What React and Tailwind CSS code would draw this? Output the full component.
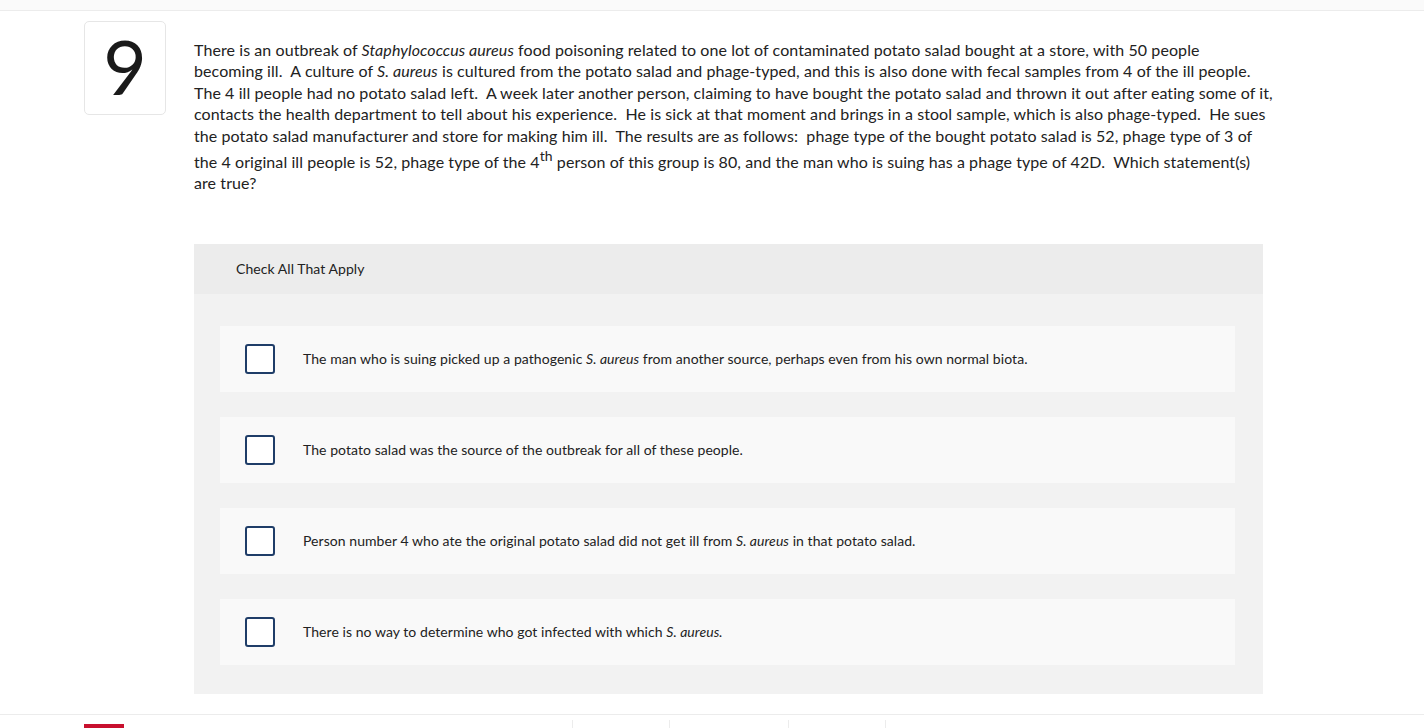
import React from 'react';

const font = { fontFamily: 'Lato, "Open Sans", "Liberation Sans", sans-serif' };

const options = [
  <>The man who is suing picked up a pathogenic <i>S. aureus</i> from another source, perhaps even from his own normal biota.</>,
  <>The potato salad was the source of the outbreak for all of these people.</>,
  <>Person number 4 who ate the original potato salad did not get ill from <i>S. aureus</i> in that potato salad.</>,
  <>There is no way to determine who got infected with which <i>S. aureus.</i></>,
];

const Option = ({ children }) => (
  <label className="flex items-center h-[66px] bg-[#f9f9f9] px-[25px] cursor-pointer">
    <span className="w-[30px] h-[30px] shrink-0 border-2 border-[#1f3d68] rounded-[3px] bg-white"></span>
    <span className="ml-[28px] text-[14px] tracking-[0.06px] text-[#222]">{children}</span>
  </label>
);

export default function App() {
  return (
    <div className="w-[1424px] h-[728px] bg-white overflow-hidden flex flex-col" style={font}>
      {/* top strip */}
      <div className="h-[11px] bg-[#fafafa] border-b border-[#ececec] shrink-0"></div>

      <div className="flex-1 flex flex-col">
        <div className="flex pl-[84px] pt-[10px]">
          {/* question number */}
          <div className="w-[82px] h-[94px] shrink-0 border border-[#e6e6e6] rounded-[5px] flex items-center justify-center">
            <span className="text-[75px] leading-none text-[#1a1a1a] font-normal -mt-[4px]">9</span>
          </div>

          <div className="ml-[28px] w-[1069px]">
            {/* line breaks kept as in the source layout */}
            <p className="mt-[18px] w-[1100px] text-[16px] tracking-[0.08px] leading-[21.4px] text-[#222]">
              There is an outbreak of <i>Staphylococcus aureus</i> food poisoning related to one lot of contaminated potato salad bought at a store, with 50 people<br />
              becoming ill.&nbsp; A culture of <i>S. aureus</i> is cultured from the potato salad and phage-typed, and this is also done with fecal samples from 4 of the ill people.<br />
              The 4 ill people had no potato salad left.&nbsp; A week later another person, claiming to have bought the potato salad and thrown it out after eating some of it,<br />
              contacts the health department to tell about his experience.&nbsp; He is sick at that moment and brings in a stool sample, which is also phage-typed.&nbsp; He sues<br />
              the potato salad manufacturer and store for making him ill.&nbsp; The results are as follows:&nbsp; phage type of the bought potato salad is 52, phage type of 3 of<br />
              the 4 original ill people is 52, phage type of the 4<sup className="top-0 align-[7px] text-[14px] leading-[20px]">th</sup> person of this group is 80, and the man who is suing has a phage type of 42D.&nbsp; Which statement(s)<br />
              are true?
            </p>

            <div className="mt-[50px] bg-[#f2f2f2]">
              <div className="h-[50px] bg-[#ececec] flex items-center pl-[42px] text-[14px] tracking-[0.06px] text-[#222]">
                Check All That Apply
              </div>
              <div className="pt-[32px] pb-[29px] pl-[26px] pr-[28px] flex flex-col gap-[25px]">
                {options.map((o, i) => (
                  <Option key={i}>{o}</Option>
                ))}
              </div>
            </div>
          </div>
        </div>
      </div>

      {/* footer */}
      <div className="h-[14px] shrink-0 border-t border-[#ececec] relative">
        <div className="absolute left-[84px] bottom-0 w-[40px] h-[4px] bg-[#c8102e]"></div>
        <div className="absolute left-[572px] top-[5px] bottom-0 flex">
          <div className="w-[97px] border-l border-[#ececec] h-full"></div>
          <div className="w-[119px] border-l border-[#ececec] h-full"></div>
          <div className="w-[97px] border-l border-[#ececec] h-full"></div>
          <div className="w-[1px] border-l border-[#ececec] h-full"></div>
        </div>
      </div>
    </div>
  );
}
